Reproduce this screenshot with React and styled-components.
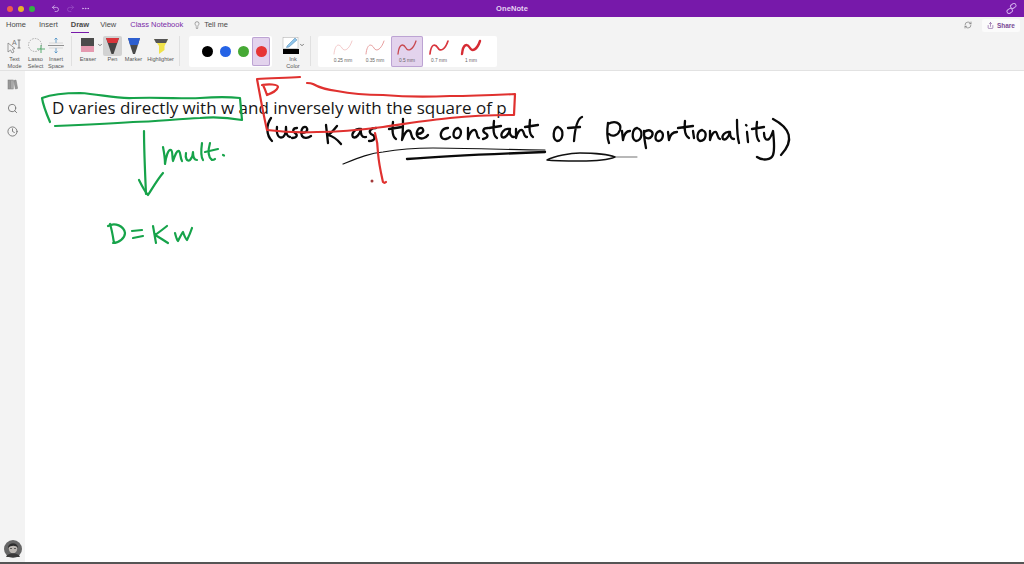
import React from "react";
import styled, { createGlobalStyle } from "styled-components";
import { Search, Clock, Undo2, Redo2, Ellipsis, Lightbulb, RefreshCw, Share, ChevronDown } from "lucide-react";

const Global = createGlobalStyle`
  html, body { margin: 0; height: 100%; background: #fff; overflow: hidden; }
  #root { height: 100%; }
  * { box-sizing: border-box; }
`;
const Page = styled.div`
  width: 1024px; height: 564px; display: flex; flex-direction: column;
  font-family: "Liberation Sans", Arial, sans-serif; color: #444;
`;
const TitleBar = styled.header`
  height: 17px; flex: none; background: #7719aa; display: grid;
  grid-template-columns: 1fr auto 1fr; align-items: center; padding: 0 7px;
`;
const TitleLeft = styled.div`display: flex; align-items: center;`;
const Light = styled.span`
  width: 6px; height: 6px; border-radius: 50%; margin-right: 5px; background: ${p => p.$c};
`;
const TitleTool = styled.span`
  display: flex; margin-left: ${p => p.$gap || 0}px; color: ${p => p.$c || "#dcbdf0"};
`;
const AppName = styled.div`font-size: 7.5px; font-weight: 700; color: #e6d3f2; letter-spacing: .1px;`;
const TitleRight = styled.div`display: flex; justify-content: flex-end; color: #cfa8ea; padding-right: 0;`;
const TabRow = styled.nav`
  height: 16px; flex: none; background: #f3f3f3; display: flex; align-items: center; padding-left: 6px;
`;
const Tab = styled.span`
  position: relative; font-size: 7.5px; margin-right: ${p => p.$mr}px; line-height: 16px;
  color: ${p => (p.$accent ? "#7a2ba8" : "#4a4a4a")}; font-weight: ${p => (p.$active ? 700 : 400)};
  ${p => p.$active && `&::after { content: ""; position: absolute; left: 0; right: 0; bottom: 0; height: 1.5px; background: #7719aa; }`}
`;
const TabIcon = styled.span`display: flex; margin-right: 3px; color: #777;`;
const TabEnd = styled.div`margin-left: auto; display: flex; align-items: center; gap: 10px; padding-right: 4px; color: #777;`;
const ShareBtn = styled.span`
  display: flex; align-items: center; gap: 3px; background: #fbfbfb; height: 13px; padding: 0 5px;
  border-radius: 2px; font-size: 6.5px; font-weight: 700; color: #7a4a96;
`;
const Ribbon = styled.section`
  height: 38px; flex: none; background: #f3f3f3; border-bottom: 1px solid #e2e2e2;
  display: flex; align-items: flex-start; padding: 3px 0 0 4px;
`;
const Tool = styled.div`
  position: relative; width: ${p => p.$w}px; height: 31px; padding-right: ${p => p.$pr || 0}px;
  display: flex; flex-direction: column; align-items: center;
`;
const ToolArt = styled.svg`
  width: ${p => p.$w || 20}px; height: 20px; flex: none; display: block; border-radius: 2px;
  background: ${p => (p.$on ? "#d2d2d2" : "transparent")};
`;
const ToolLabel = styled.span`
  font-size: 5.6px; line-height: 6.6px; text-align: center; color: #555; white-space: pre-line;
`;
const Caret = styled.span`
  position: absolute; right: ${p => p.$r}px; top: ${p => p.$t}px; display: flex; color: #555;
`;
const Separator = styled.div`
  width: 1px; height: 30px; background: #e0e0e0; margin: 0 ${p => p.$r}px 0 ${p => p.$l}px;
`;
const Panel = styled.div`
  height: 31px; background: #fff; display: flex; align-items: center; border-radius: 2px;
  padding: 0 ${p => p.$pr}px 0 ${p => p.$pl}px; margin-right: ${p => p.$mr || 0}px;
`;
const Swatch = styled.div`
  width: 18px; height: 29px; display: flex; align-items: center; justify-content: center; border-radius: 2px;
  background: ${p => (p.$on ? "#e3d3ed" : "transparent")};
  box-shadow: ${p => (p.$on ? "inset 0 0 0 1px #bca3d3" : "none")};
`;
const Dot = styled.span`width: 11px; height: 11px; border-radius: 50%; background: ${p => p.$c};`;
const Stroke = styled.div`
  width: 32px; height: 31px; display: flex; flex-direction: column; align-items: center; padding-top: 2px;
  background: ${p => (p.$on ? "#e3d3ed" : "transparent")}; border-radius: 2px;
  box-shadow: ${p => (p.$on ? "inset 0 0 0 1px #bca3d3" : "none")};
`;
const StrokeArt = styled.svg`width: 24px; height: 19px; display: block;`;
const StrokeLabel = styled.span`font-size: 4.8px; line-height: 7px; color: #666;`;
const Body = styled.main`flex: 1; min-height: 0; display: flex;`;
const Side = styled.aside`
  width: 25px; flex: none; background: #f3f3f3; display: flex; flex-direction: column; align-items: center;
  padding-top: 8px; gap: 12.5px; color: #777; position: relative;
`;
const Avatar = styled.svg`position: absolute; left: 4px; bottom: 4px; width: 18px; height: 18px;`;
const Canvas = styled.div`flex: 1; position: relative; background: #fff; overflow: hidden;`;
const Question = styled.p`
  position: absolute; left: 27px; top: 25px; margin: 0; white-space: nowrap;
  font-family: "Open Sans", sans-serif; font-size: 17px; line-height: 23px; color: #161616;
`;
const Ink = styled.svg`position: absolute; left: 0; top: 0; width: 999px; height: 491px; fill: none; stroke-linecap: round; stroke-linejoin: round;`;
const Footer = styled.div`height: 2px; flex: none; background: #555;`;

const curve = "M3 16 C4 6 8 5 11 10 C13 14 18 12 21 3";
const colors = ["#000", "#2563e6", "#46a935", "#e63535"];
const widths = [["0.25 mm", .7, "#eeb4b4"], ["0.35 mm", 1, "#e8a0a0"], ["0.5 mm", 1.3, "#c8484f"], ["0.7 mm", 1.7, "#d9363e"], ["1 mm", 2.4, "#d62b33"]];

const green = "#16a34a";
const red = "#e0312f";
const greenInk = [
  "M50 122 C47 115 43 105 42 98 C50 95 65 93 80 93 C100 94 115 99 133 98 C160 97 185 99 200 98 C215 97 230 97 240 98 L242 120 C225 117 212 117 200 118 C175 119 155 122 133 122 C105 124 80 125 55 126",
  "M144 131 C144 150 145 172 146 194",
  "M139 180 C142 186 145 192 148 195 C152 189 157 180 163 173",
  "M163 147 C164 152 165 158 165 164 C166 157 168 149 171 150 C173 151 172 158 173 161 C175 155 177 150 179 151 C181 153 180 158 182 161",
  "M186 153 C185 158 187 162 190 160 C192 158 193 155 193 152 C193 156 194 160 197 160",
  "M202 143 C201 150 201 157 203 160",
  "M210 143 C208 150 208 157 212 160 C213 160 214 160 215 159",
  "M205 152 L218 149",
  "M223 155 L224 155.5",
  "M110 224 C112 230 113 237 114 243 M108 226 C115 222 124 226 125 233 C125 238 119 243 113 243",
  "M132 231 L142 230 M133 238 L143 236",
  "M153 226 C154 231 155 238 156 243 M167 226 C162 230 158 233 155 235 C159 237 163 240 168 243",
  "M175 233 C176 237 177 240 178 241 C180 237 182 233 183 232 C184 235 186 239 187 240 C189 236 191 231 192 228",
];
const redInk = [
  "M267 130 C263 113 260 95 257 79 C272 78 287 78 300 77",
  "M263 85 C265 89 266 92 267 95 M262 85 C268 84 278 84 278 87 C277 91 272 93 267 95",
  "M307 83 C309 83 311 83 313 84 C320 88 328 90 337 91 C352 94 368 95 383 95 C405 97 430 97 450 96 C472 96 495 95 515 94 L514 115 C495 115 470 116 450 118 C428 120 405 124 383 127 C360 130 338 132 317 132 C300 133 283 132 267 130",
  "M375 133 C377 140 378 147 378 153 C379 165 381 173 383 182 C384 183 385 183 386 182",
];
const blackInk = [
  "M271 118 C266 125 266 135 272 141",
  "M277 127 C276 135 279 139 283 137 C286 135 286 130 286 127 C286 132 287 137 290 137",
  "M297 128 C293 128 292 131 295 133 C298 135 297 138 292 138",
  "M302 133 C306 133 309 130 306 127 C302 126 300 132 302 136 C304 139 308 138 311 136",
  "M326 125 L328 143 M337 126 C333 131 330 134 328 135 C332 136 337 139 341 144",
  "M360 129 C355 128 351 134 353 137 C356 139 360 134 361 129 C360 134 362 138 366 137",
  "M376 128 C371 128 368 131 371 134 C376 136 376 141 369 141",
  "M393 122 C392 130 392 137 396 139 M389 129 L402 127",
  "M403 119 C403 127 403 134 402 140 C404 134 407 129 410 131 C412 134 411 138 414 139",
  "M417 134 C422 134 425 131 422 128 C418 127 415 133 418 137 C421 140 426 138 428 135",
  "M448 128 C442 128 439 134 442 138 C444 140 448 139 450 137",
  "M458 128 C453 129 452 137 456 138 C461 139 463 130 458 128",
  "M468 128 L468 139 C469 134 472 129 475 130 C478 132 476 137 479 138",
  "M488 128 C483 128 482 131 485 133 C489 135 488 138 483 139",
  "M494 121 C493 129 493 136 497 138 M489 128 L501 126",
  "M509 129 C504 128 500 134 502 137 C505 139 509 134 510 129 C509 134 511 137 514 137",
  "M516 129 L516 138 C517 133 520 129 522 130 C525 132 523 137 527 137",
  "M530 120 C529 128 529 135 533 137 M525 127 L538 125",
  "M558 127 C553 128 552 139 557 141 C563 141 565 130 558 127",
  "M582 117 C577 119 575 128 574 141 M568 128 L580 127",
  "M608 123 C607 130 607 138 609 143 M608 124 C615 120 622 123 620 130 C618 136 612 137 609 134",
  "M622 131 L623 140 C624 134 626 131 630 131",
  "M637 128 C632 129 631 139 636 141 C642 141 644 130 637 128",
  "M644 131 C644 137 645 143 646 148 M644 132 C650 128 654 132 652 136 C650 139 647 139 645 137",
  "M660 131 C655 132 654 140 658 141 C663 141 665 133 660 131",
  "M668 132 L669 140 C670 135 672 132 677 132",
  "M685 121 C684 130 685 136 689 138 M678 128 L693 126",
  "M693 131 L694 138",
  "M702 130 C697 131 696 139 700 141 C706 141 708 132 702 130",
  "M710 131 L710 140 C711 135 714 131 716 132 C718 134 717 138 720 139",
  "M730 132 C725 131 721 136 723 139 C726 141 729 136 730 132 C730 136 731 139 734 139",
  "M737 120 C737 128 737 136 739 143",
  "M747 132 L748 142 M746 125 L746.5 125.5",
  "M757 122 C756 130 756 138 759 141 M752 129 L764 127",
  "M764 133 C764 138 766 141 769 139 C771 137 772 134 773 131 C774 140 775 150 773 155 C771 160 763 161 757 157",
  "M773 119 C790 128 795 140 781 155",
];

const BooksIcon = () => (
  <svg width="11" height="11" viewBox="0 0 11 11">
    <rect x="1" y="1" width="2.4" height="9" fill="#999" stroke="#777" strokeWidth=".5" />
    <rect x="3.8" y="1" width="2.4" height="9" fill="#aaa" stroke="#777" strokeWidth=".5" />
    <path d="M6.8 1.6 L9 1 L10.6 9.4 L8.4 10 Z" fill="#999" stroke="#777" strokeWidth=".5" />
  </svg>
);
const LinkIcon = () => (
  <svg width="11" height="11" viewBox="0 0 11 11" fill="none" stroke="currentColor" strokeWidth="1">
    <rect x="4.5" y="1" width="5.5" height="4" rx="1.6" transform="rotate(-35 7.2 3)" />
    <rect x="1" y="6" width="5.5" height="4" rx="1.6" transform="rotate(-35 3.7 8)" />
  </svg>
);

export default function App() {
  return (
    <Page>
      <Global />
      <TitleBar>
        <TitleLeft>
          <Light $c="#ee5a52" /><Light $c="#e9b22c" /><Light $c="#35b045" />
          <TitleTool $gap={11}><Undo2 size={9} /></TitleTool>
          <TitleTool $gap={6} $c="#9a4fc4"><Redo2 size={9} /></TitleTool>
          <TitleTool $gap={6}><Ellipsis size={9} /></TitleTool>
        </TitleLeft>
        <AppName>OneNote</AppName>
        <TitleRight><LinkIcon /></TitleRight>
      </TitleBar>
      <TabRow>
        <Tab $mr={13}>Home</Tab>
        <Tab $mr={13}>Insert</Tab>
        <Tab $mr={11} $active>Draw</Tab>
        <Tab $mr={14}>View</Tab>
        <Tab $mr={10} $accent>Class Notebook</Tab>
        <TabIcon><Lightbulb size={8} /></TabIcon>
        <Tab $mr={0}>Tell me</Tab>
        <TabEnd>
          <RefreshCw size={8} />
          <ShareBtn><Share size={7} />Share</ShareBtn>
        </TabEnd>
      </TabRow>
      <Ribbon>
        <Tool $w={21}>
          <ToolArt viewBox="0 0 20 20">
            <path d="M3 7 L3 16 L5.5 14 L7 17 L9 16 L7.5 13 L10 12.5 Z" fill="none" stroke="#777" strokeWidth=".7" />
            <text x="7" y="9" fontSize="7" fill="#777" fontFamily="Liberation Sans">A</text>
            <path d="M14 4 L14 12 M12.5 4 H15.5 M12.5 12 H15.5" stroke="#666" strokeWidth=".8" />
          </ToolArt>
          <ToolLabel>{"Text\nMode"}</ToolLabel>
        </Tool>
        <Tool $w={21}>
          <ToolArt viewBox="0 0 20 20">
            <circle cx="9" cy="9" r="6.5" fill="none" stroke="#999" strokeWidth=".8" strokeDasharray="1.5 1.2" />
            <path d="M15 9 V17 M11 13 H19" stroke="#4aa564" strokeWidth=".9" />
          </ToolArt>
          <ToolLabel>{"Lasso\nSelect"}</ToolLabel>
        </Tool>
        <Tool $w={20}>
          <ToolArt viewBox="0 0 20 20">
            <path d="M2 9.5 H18" stroke="#777" strokeWidth=".8" />
            <path d="M10 2 V7 M8.5 3.5 L10 2 L11.5 3.5 M10 12 V17 M8.5 15.5 L10 17 L11.5 15.5" fill="none" stroke="#4b8fc4" strokeWidth=".8" />
            <path d="M3 7 H17 M3 12 H17" stroke="#bbb" strokeWidth=".5" />
          </ToolArt>
          <ToolLabel>{"Insert\nSpace"}</ToolLabel>
        </Tool>
        <Separator $l={5} $r={4} />
        <Tool $w={27} $pr={3}>
          <ToolArt viewBox="0 0 20 20">
            <rect x="3" y="2" width="13" height="8" fill="#4b4b4b" />
            <rect x="3" y="10" width="13" height="6" fill="#e59ab0" />
          </ToolArt>
          <ToolLabel>Eraser</ToolLabel>
          <Caret $r={0} $t={6}><ChevronDown size={6} strokeWidth={3} /></Caret>
        </Tool>
        <Tool $w={19}>
          <ToolArt viewBox="0 0 19 20" $w={19} $on>
            <path d="M3 2 H16 L10.5 18 H8.5 Z" fill="#444" />
            <path d="M3 2 H16 L14 7 H5 Z" fill="#d8343a" />
          </ToolArt>
          <ToolLabel>Pen</ToolLabel>
        </Tool>
        <Tool $w={23}>
          <ToolArt viewBox="0 0 20 20">
            <path d="M4 2 H16 L13 12 L11 18 H9 L7 12 Z" fill="#4a4a4a" />
            <path d="M4 2 H16 L14 9 H6 Z" fill="#2d5fd0" />
          </ToolArt>
          <ToolLabel>Marker</ToolLabel>
        </Tool>
        <Tool $w={31}>
          <ToolArt viewBox="0 0 20 20">
            <path d="M3 3 H17 L13.5 10 V14 L8 18 V10 Z" fill="#f0e24a" />
            <path d="M3 3 H17 L15 7 H5 Z" fill="#555" />
          </ToolArt>
          <ToolLabel>Highlighter</ToolLabel>
        </Tool>
        <Separator $l={3} $r={9} />
        <Panel $pl={9} $pr={2} $mr={10}>
          {colors.map((c, i) => (
            <Swatch key={c} $on={i === 3}><Dot $c={c} /></Swatch>
          ))}
        </Panel>
        <Tool $w={22}>
          <ToolArt viewBox="0 0 22 20" $w={22}>
            <rect x="1" y="1.5" width="15" height="11" fill="#fff" stroke="#aaa" strokeWidth=".5" />
            <path d="M5 10 L13 2 L15 4 L7 11 L4.5 11.5 Z" fill="#8fc4ea" stroke="#4d86b0" strokeWidth=".5" />
            <rect x="1" y="13" width="16" height="5" fill="#000" />
          </ToolArt>
          <ToolLabel>{"Ink\nColor"}</ToolLabel>
          <Caret $r={-1} $t={6}><ChevronDown size={6} strokeWidth={3} /></Caret>
        </Tool>
        <Separator $l={6} $r={7} />
        <Panel $pl={9} $pr={10}>
          {widths.map(([label, w, c], i) => (
            <Stroke key={label} $on={i === 2}>
              <StrokeArt viewBox="0 0 24 19"><path d={curve} fill="none" stroke={c} strokeWidth={w} strokeLinecap="round" /></StrokeArt>
              <StrokeLabel>{label}</StrokeLabel>
            </Stroke>
          ))}
        </Panel>
      </Ribbon>
      <Body>
        <Side>
          <BooksIcon />
          <Search size={11} />
          <Clock size={11} />
          <Avatar viewBox="0 0 18 18">
            <circle cx="9" cy="9" r="9" fill="#666" />
            <ellipse cx="9" cy="8.5" rx="4.2" ry="5" fill="#bdb8b3" />
            <path d="M2 17 C4 12 14 12 16 17 Z" fill="#3a3a3a" />
            <path d="M4 8 C4 1.5 14 1.5 14 8 C12 5 7 5 4 8 Z" fill="#2d2d2d" />
            <path d="M6 8.5 H8 M10 8.5 H12" stroke="#333" strokeWidth=".7" />
          </Avatar>
        </Side>
        <Canvas>
          <Question>D varies directly with w and inversely with the square of p</Question>
          <Ink viewBox="25 71 999 491">
            {blackInk.map((d, i) => <path key={i} d={d} stroke="#0a0a0a" strokeWidth="2.3" />)}
            <path d="M343 164 C358 158 370 153 383 152 C400 149 415 148 433 148 C470 148 510 150 545 150" stroke="#111" strokeWidth="1.2" />
            <path d="M407 159 C445 156 490 154 545 152" stroke="#0a0a0a" strokeWidth="2.4" />
            <path d="M547 160 C555 156 570 153 580 153 C595 153 610 155 615 157 C608 160 595 161 580 161 C565 161 555 161 547 160" stroke="#111" strokeWidth="1.4" />
            <path d="M615 157 L637 157" stroke="#333" strokeWidth=".7" />
            {greenInk.map((d, i) => <path key={i} d={d} stroke={green} strokeWidth="2.2" />)}
            {redInk.map((d, i) => <path key={i} d={d} stroke={red} strokeWidth="2.2" />)}
            <circle cx="372" cy="181" r="1.5" fill="#a33a3a" stroke="none" />
          </Ink>
        </Canvas>
      </Body>
      <Footer />
    </Page>
  );
}
